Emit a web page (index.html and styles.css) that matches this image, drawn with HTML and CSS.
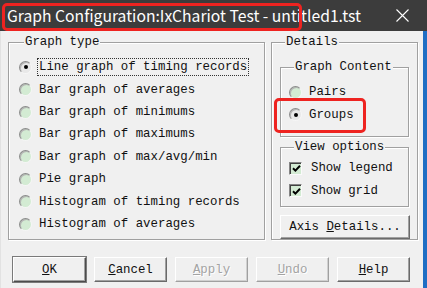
FILE: index.html
```html
<!DOCTYPE html>
<html>
<head>
<meta charset="utf-8">
<link rel="stylesheet" href="styles.css">
</head>
<body>
<div class="window">
  <div class="titlebar">
    <span class="title">Graph Configuration:IxChariot Test - untitled1.tst</span>
    <svg class="close" width="13" height="13" viewBox="0 0 13 13"><path d="M0.5 0.5 L12.5 12.5 M12.5 0.5 L0.5 12.5" stroke="#fff" stroke-width="1.1" fill="none"/></svg>
    <div class="mark mark-title"></div>
  </div>
  <div class="client">
    <div class="dialog">
      <div class="groups">
        <fieldset class="group graph-type">
          <legend>Graph type</legend>
          <div class="opt"><span class="radio checked"></span><span class="lbl focus">Line graph of timing records</span></div>
          <div class="opt"><span class="radio"></span><span class="lbl">Bar graph of averages</span></div>
          <div class="opt"><span class="radio"></span><span class="lbl">Bar graph of minimums</span></div>
          <div class="opt"><span class="radio"></span><span class="lbl">Bar graph of maximums</span></div>
          <div class="opt"><span class="radio"></span><span class="lbl">Bar graph of max/avg/min</span></div>
          <div class="opt"><span class="radio"></span><span class="lbl">Pie graph</span></div>
          <div class="opt"><span class="radio"></span><span class="lbl">Histogram of timing records</span></div>
          <div class="opt"><span class="radio"></span><span class="lbl">Histogram of averages</span></div>
        </fieldset>
        <fieldset class="group details">
          <legend>Details</legend>
          <fieldset class="group sub content">
            <legend>Graph Content</legend>
            <div class="opt sm"><span class="radio"></span><span class="lbl">Pairs</span></div>
            <div class="opt sm"><span class="radio checked"></span><span class="lbl">Groups</span></div>
          </fieldset>
          <fieldset class="group sub view">
            <legend>View options</legend>
            <div class="opt sm"><span class="check"><svg width="9" height="9" viewBox="0 0 9 9"><path d="M1 4.2 L3.4 6.6 L8 1.8" stroke="#000" stroke-width="2" fill="none"/></svg></span><span class="lbl">Show legend</span></div>
            <div class="opt sm"><span class="check"><svg width="9" height="9" viewBox="0 0 9 9"><path d="M1 4.2 L3.4 6.6 L8 1.8" stroke="#000" stroke-width="2" fill="none"/></svg></span><span class="lbl">Show grid</span></div>
          </fieldset>
          <div class="btn axis"><span>Axis <u>D</u>etails...</span></div>
        </fieldset>
      </div>
      <div class="buttons">
        <div class="btn default"><span><u>O</u>K</span></div>
        <div class="btn"><span><u>C</u>ancel</span></div>
        <div class="btn disabled"><span><u>A</u>pply</span></div>
        <div class="btn disabled"><span><u>U</u>ndo</span></div>
        <div class="btn"><span><u>H</u>elp</span></div>
      </div>
      <div class="mark mark-groups"></div>
    </div>
    <div class="edge"></div>
  </div>
</div>
</body>
</html>
```

FILE: styles.css
```css
* { box-sizing: border-box; }
html, body { margin: 0; padding: 0; }
body {
  width: 427px;
  height: 288px;
  overflow: hidden;
  background: #f0f0f0;
  font-family: "Liberation Mono", "Courier New", monospace;
  font-size: 12.4px;
  color: #111;
}
.window {
  width: 427px;
  height: 288px;
  display: flex;
  flex-direction: column;
}
.titlebar {
  position: relative;
  height: 31px;
  flex: none;
  background: #3c3c3c;
  display: flex;
  align-items: center;
  padding-left: 7px;
}
.title {
  font-family: "Noto Sans CJK SC", "Noto Sans", sans-serif;
  font-size: 15.7px;
  color: #fff;
  white-space: nowrap;
  margin-top: -1px;
}
.close {
  position: absolute;
  left: 396px;
  top: 9px;
}
.mark {
  position: absolute;
  border: 3px solid #ee2320;
  border-radius: 5px;
  pointer-events: none;
}
.mark-title { left: 2px; top: 3px; width: 300px; height: 28px; }
.mark-groups { left: 273px; top: 67px; width: 92px; height: 35px; }
.client {
  flex: 1;
  display: flex;
}
.dialog {
  position: relative;
  flex: 1;
  background: #f0f0f0;
  padding: 4px 0 0 7px;
  border-left: 1px solid #e2e2e2;
}
.edge {
  width: 4px;
  background: #1f6ec4;
}
.groups {
  display: flex;
  gap: 6px;
  height: 205px;
}
.group {
  margin: 0;
  border: 1px solid #a0a0a0;
  box-shadow: inset 1px 1px 0 #fff, 1px 1px 0 #fff;
  min-width: 0;
}
.group legend {
  margin-left: 5px;
  padding: 0 1px;
  line-height: 14px;
  background: #f0f0f0;
}
.graph-type {
  width: 257px;
  height: 205px;
  padding: 7px 0 0 10px;
}
.details {
  width: 147px;
  height: 205px;
  padding: 11px 8px 0 8px;
  display: flex;
  flex-direction: column;
}
.sub { width: 129px; }
.content { padding: 7px 0 0 8px; height: 77px; }
.view { margin-top: 3px; padding: 3px 0 0 8px; height: 67px; }
.opt {
  height: 22.43px;
  display: flex;
  align-items: center;
}
.opt.sm { height: 22.5px; }
.radio {
  width: 13px;
  height: 13px;
  flex: none;
  border-radius: 50%;
  border: 1px solid;
  border-color: #8c8c8c #f6f6f6 #f6f6f6 #8c8c8c;
  background: #d3ebd3;
  box-shadow: inset 1px 1px 0 #b4b4b4;
  margin-right: 5px;
  position: relative;
}
.radio.checked { background: #e8e8e8; }
.radio.checked::after {
  content: "";
  position: absolute;
  left: 3.5px;
  top: 3.5px;
  width: 4px;
  height: 4px;
  border-radius: 50%;
  background: #000;
}
.check {
  width: 13px;
  height: 13px;
  flex: none;
  border: 1px solid;
  border-color: #858585 #fafafa #fafafa #858585;
  box-shadow: inset 1px 1px 0 #404040;
  background: #d3ebd3;
  margin-right: 7px;
  display: flex;
  align-items: center;
  justify-content: center;
  padding: 1px 0 0 1px;
}
.lbl {
  line-height: 14px;
  padding: 1px;
  border: 1px solid transparent;
  white-space: nowrap;
}
.lbl.focus { border: 1px dotted #333; }
.btn {
  height: 25px;
  display: flex;
  align-items: center;
  justify-content: center;
  background: #f0f0f0;
  border: 1px solid;
  border-color: #fff #6a6a6a #6a6a6a #fff;
  box-shadow: inset -1px -1px 0 #a0a0a0;
  white-space: nowrap;
}
.axis {
  margin-top: 8px;
  width: 130px;
  height: 24px;
}
.buttons {
  display: flex;
  gap: 8px;
  margin-top: 17px;
  padding-left: 5px;
}
.buttons .btn { width: 73px; }
.btn.default {
  border-color: #fff #4c4c4c #4c4c4c #fff;
  outline: 1px solid #7a7a7a;
  outline-offset: 0;
}
.btn.disabled {
  color: #a3a3a3;
  text-shadow: 1px 1px 0 #fff;
  border-color: #fff #a0a0a0 #a0a0a0 #fff;
  box-shadow: inset -1px -1px 0 #d0d0d0;
}
```
